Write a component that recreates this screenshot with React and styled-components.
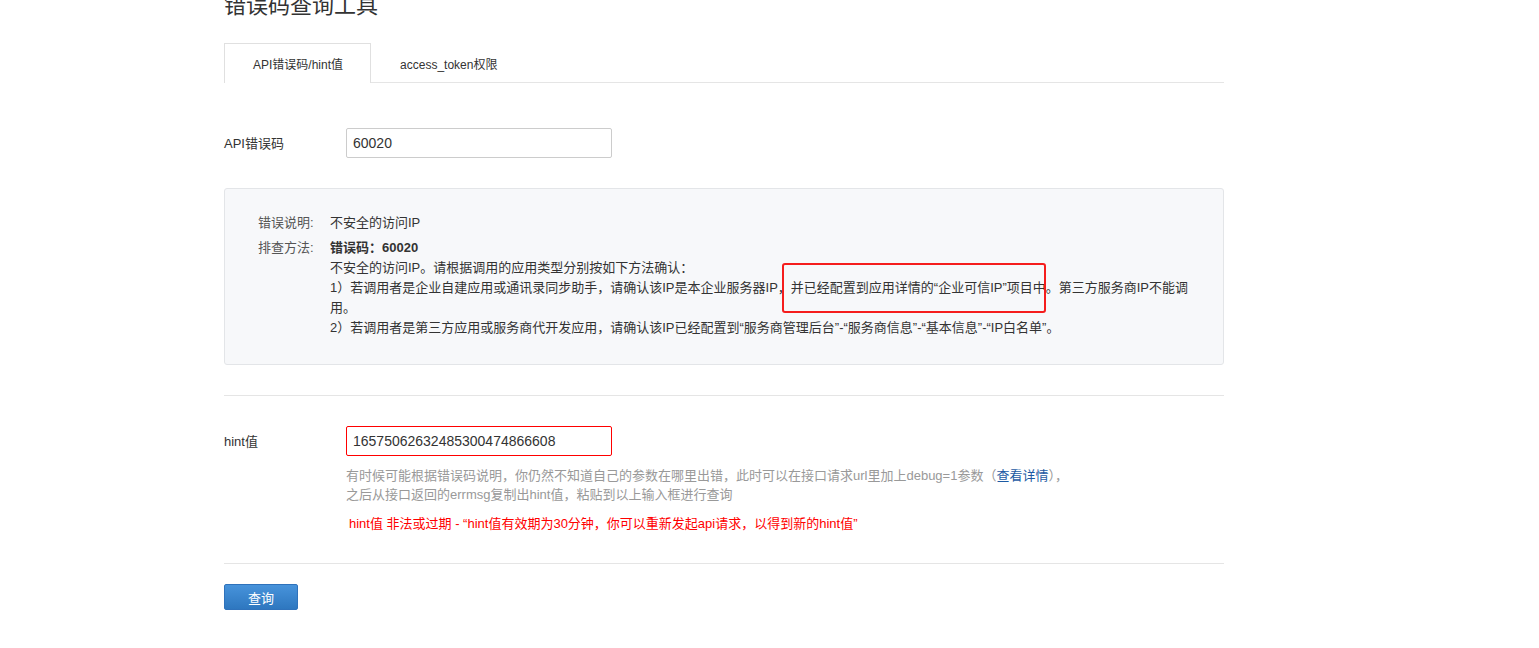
import styled, { createGlobalStyle } from "styled-components";

const GlobalStyle = createGlobalStyle`
body {
    margin: 0;
    background: #fff;
    font-family: "Liberation Sans", "Noto Sans CJK SC", sans-serif;
    color: #333;
    font-size: 13px;
}
`
const Page = styled.div`
padding-left: 224px;
overflow: hidden;
height: 648px;
`
const Content = styled.div`
width: 1000px;
`
const Title = styled.h1`
margin: -7px 0 0;
font-size: 22px;
line-height: 26px;
font-weight: normal;
color: #333;
`
const Tabs = styled.div`
display: flex;
margin-top: 24px;
height: 39px;
border-bottom: 1px solid #e5e5e5;
`
const Tab = styled.div`
display: flex;
align-items: center;
padding: 0 27px 0 28px;
height: 40px;
font-size: 12px;
color: #333;
box-sizing: border-box;
background: ${p => p.active ? '#fff' : 'transparent'};
border: 1px solid ${p => p.active ? '#e0e0e0' : 'transparent'};
border-bottom: none;
`
const FormRow = styled.div`
display: flex;
align-items: center;
margin-top: ${p => p.top}px;
`
const Label = styled.div`
width: 122px;
font-size: 13px;
color: #333;
margin-top: -2px;
`
const Input = styled.input`
box-sizing: border-box;
width: 266px;
height: 30px;
padding: 0 6px;
font-family: "Liberation Sans", "Noto Sans CJK SC", sans-serif;
font-size: 14px;
color: #333;
border: 1px solid ${p => p.error ? '#f00' : '#ccc'};
border-radius: 2px;
outline: none;
`
const InfoBox = styled.div`
margin-top: 30px;
box-sizing: border-box;
height: 177px;
background: #f7f8fa;
border: 1px solid #e3e5e8;
border-radius: 3px;
padding: 24px 33px 0;
`
const InfoRow = styled.div`
display: flex;
line-height: 20px;
margin-bottom: 5px;
`
const InfoLabel = styled.div`
width: 72px;
flex-shrink: 0;
color: #555;
`
const InfoText = styled.div`
flex: 1;
color: #333;
`
const Strong = styled.div`
font-weight: bold;
`
const Marked = styled.span`
position: relative;
&::after {
    content: "";
    position: absolute;
    left: -9px;
    right: 0;
    top: -17px;
    bottom: -18px;
    border: 2px solid #f51d1d;
    border-radius: 3px;
    pointer-events: none;
}
`
const Divider = styled.div`
margin-top: ${p => p.top}px;
height: 1px;
background: #e5e5e5;
`
const Help = styled.div`
margin: 10px 0 0 122px;
line-height: 19px;
color: #999;
`
const Link = styled.a`
color: #1d5aa3;
text-decoration: none;
`
const ErrorMsg = styled.div`
margin: 11px 0 0 125px;
line-height: 18px;
color: #f00;
`
const Button = styled.button`
margin-top: 20px;
width: 74px;
height: 26px;
border: 1px solid #2f72bb;
border-radius: 2px;
background: linear-gradient(#4793db, #2e77bf);
color: #fff;
font-family: "Liberation Sans", "Noto Sans CJK SC", sans-serif;
font-size: 13px;
cursor: pointer;
`

const App = () => {
    return (
        <>
            <GlobalStyle />
            <Page>
                <Content>
                    <Title>错误码查询工具</Title>
                    <Tabs>
                        <Tab active>API错误码/hint值</Tab>
                        <Tab>access_token权限</Tab>
                    </Tabs>

                    <FormRow top={45}>
                        <Label>API错误码</Label>
                        <Input defaultValue="60020" />
                    </FormRow>

                    <InfoBox>
                        <InfoRow>
                            <InfoLabel>错误说明:</InfoLabel>
                            <InfoText>不安全的访问IP</InfoText>
                        </InfoRow>
                        <InfoRow>
                            <InfoLabel>排查方法:</InfoLabel>
                            <InfoText>
                                <Strong>错误码：60020</Strong>
                                <div>不安全的访问IP。请根据调用的应用类型分别按如下方法确认：</div>
                                <div>1）若调用者是企业自建应用或通讯录同步助手，请确认该IP是本企业服务器IP，<Marked>并已经配置到应用详情的“企业可信IP”项目中</Marked>。第三方服务商IP不能调用。</div>
                                <div>2）若调用者是第三方应用或服务商代开发应用，请确认该IP已经配置到“服务商管理后台”-“服务商信息”-“基本信息”-“IP白名单”。</div>
                            </InfoText>
                        </InfoRow>
                    </InfoBox>

                    <Divider top={30} />

                    <FormRow top={30}>
                        <Label>hint值</Label>
                        <Input error defaultValue="16575062632485300474866608" />
                    </FormRow>
                    <Help>
                        有时候可能根据错误码说明，你仍然不知道自己的参数在哪里出错，此时可以在接口请求url里加上debug=1参数（<Link href="#">查看详情</Link>），<br />
                        之后从接口返回的errmsg复制出hint值，粘贴到以上输入框进行查询
                    </Help>
                    <ErrorMsg>hint值 非法或过期 - “hint值有效期为30分钟，你可以重新发起api请求，以得到新的hint值”</ErrorMsg>

                    <Divider top={30} />
                    <Button>查询</Button>
                </Content>
            </Page>
        </>
    )
}
export default App;
